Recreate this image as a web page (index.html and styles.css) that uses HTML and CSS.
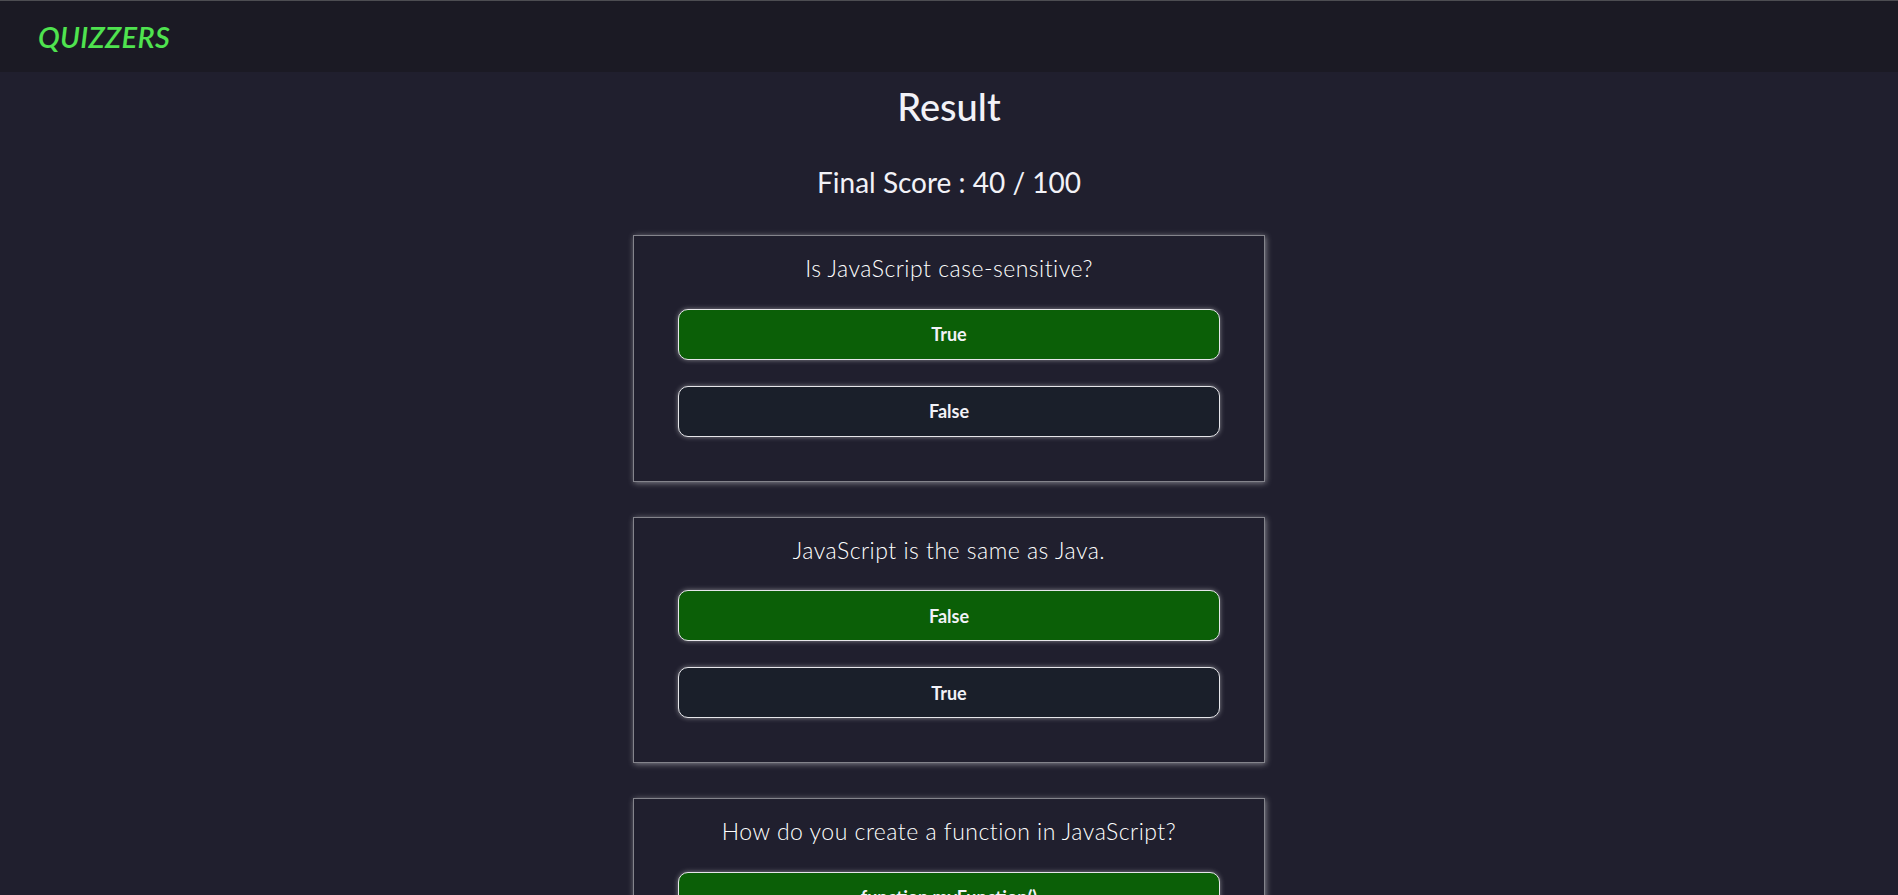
FILE: index.html
```html
<!DOCTYPE html>
<html lang="en">

<head>
    <meta charset="UTF-8">
    <meta name="viewport" content="width=device-width, initial-scale=1.0">
    <title>Quizzers - Result</title>
    <link rel="stylesheet" href="styles.css">
</head>

<body>
    <header class="navbar">
        <span class="logo">QUIZZERS</span>
    </header>

    <main class="result">
        <h1 class="result-title">Result</h1>
        <p class="final-score">Final Score : 40 / 100</p>

        <section class="review">
            <div class="review-card">
                <p class="question">Is JavaScript case-sensitive?</p>
                <div class="options">
                    <div class="option correct">True</div>
                    <div class="option">False</div>
                </div>
            </div>

            <div class="review-card">
                <p class="question">JavaScript is the same as Java.</p>
                <div class="options">
                    <div class="option correct">False</div>
                    <div class="option">True</div>
                </div>
            </div>

            <div class="review-card">
                <p class="question">How do you create a function in JavaScript?</p>
                <div class="options">
                    <div class="option correct">function myFunction()</div>
                    <div class="option">function:myFunction()</div>
                    <div class="option">function = myFunction()</div>
                </div>
            </div>

            <div class="review-card">
                <p class="question">Which keyword declares a constant?</p>
                <div class="options">
                    <div class="option correct">const</div>
                    <div class="option">let</div>
                    <div class="option">var</div>
                </div>
            </div>

            <div class="review-card">
                <p class="question">What does DOM stand for?</p>
                <div class="options">
                    <div class="option correct">Document Object Model</div>
                    <div class="option">Data Object Model</div>
                </div>
            </div>
        </section>
    </main>
</body>

</html>
```

FILE: styles.css
```css
/* General */
* {
    box-sizing: border-box;
}

::-webkit-scrollbar {
    width: 3px;
}

::-webkit-scrollbar-track {
    background: #f1f1f1;
}

::-webkit-scrollbar-thumb {
    background: #c1c1c1;
}

body {
    margin: 0;
    font-family: 'Lato', 'Open Sans', sans-serif;
    background-color: #201f2e;
    color: #f2f2f7;
}

/* Top bar */
.navbar {
    height: 72px;
    display: flex;
    align-items: center;
    padding-left: 38px;
    background-color: #1b1a24;
    border-top: 1px solid #4d4d52;
}

.logo {
    font-size: 29px;
    font-style: italic;
    font-weight: 600;
    letter-spacing: 0.3px;
    color: #4fe34f;
}

/* Result page */
.result {
    display: flex;
    flex-direction: column;
    align-items: center;
}

.result-title {
    margin: 12px 0 0;
    font-size: 38px;
    font-weight: 500;
    line-height: 1.2;
}

.final-score {
    margin: 36px 0 0;
    font-size: 28px;
    line-height: 1.2;
}

/* Answer review cards */
.review {
    width: 632px;
    display: flex;
    flex-direction: column;
    gap: 35px;
    margin-top: 36px;
    padding-bottom: 40px;
}

.review-card {
    padding: 19px 44px 44px;
    border: 1px solid rgba(255, 255, 255, 0.45);
    box-shadow: 1px 1px 6px rgba(255, 255, 255, 0.45);
}

.question {
    margin: 0;
    text-align: center;
    font-size: 23px;
    font-weight: 300;
    line-height: 1.15;
    letter-spacing: 0.5px;
    color: #ffffff;
}

.options {
    display: flex;
    flex-direction: column;
    gap: 26px;
    margin-top: 27px;
}

.option {
    height: 51px;
    display: flex;
    align-items: center;
    justify-content: center;
    font-size: 18px;
    font-weight: 700;
    background-color: #1a1f2a;
    border: 1px solid #e6e6ea;
    border-radius: 10px;
    box-shadow: 0 0 5px rgba(255, 255, 255, 0.45);
}

.option.correct {
    background-color: #0b5f07;
}
```
